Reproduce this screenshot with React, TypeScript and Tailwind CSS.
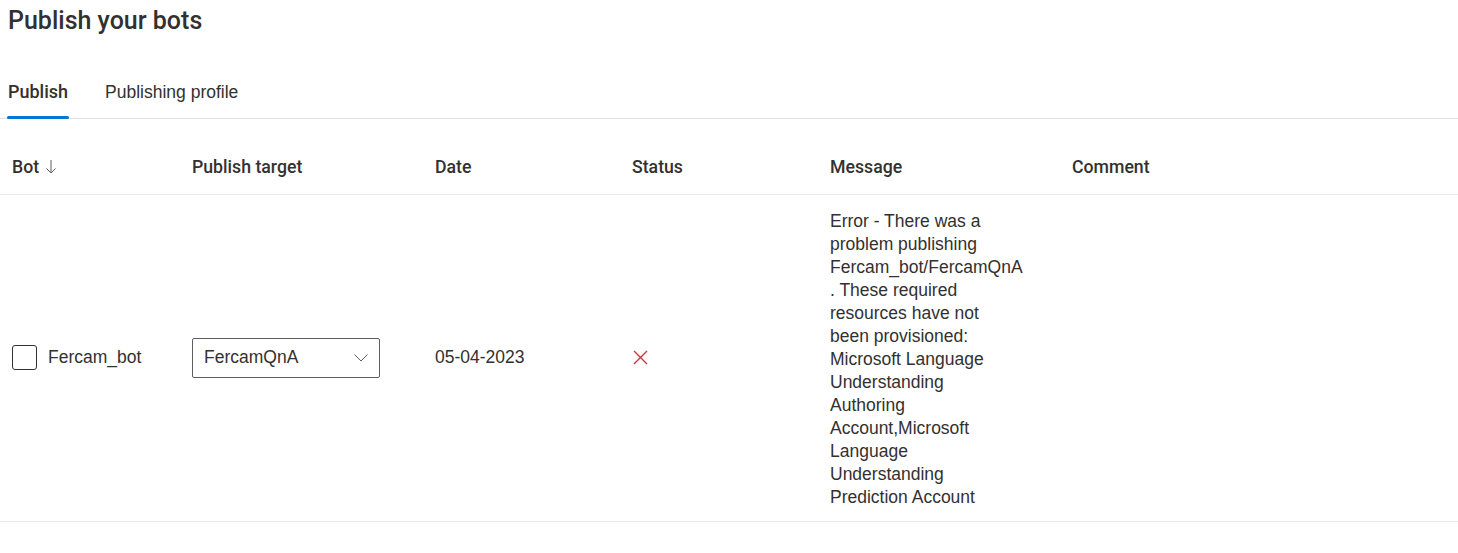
import React from 'react';

const messageLines = [
  'Error - There was a',
  'problem publishing',
  'Fercam_bot/FercamQnA',
  '. These required',
  'resources have not',
  'been provisioned:',
  'Microsoft Language',
  'Understanding',
  'Authoring',
  'Account,Microsoft',
  'Language',
  'Understanding',
  'Prediction Account',
];

const cols = 'grid grid-cols-[180px_243px_197px_198px_242px_1fr] pl-3';

const App: React.FC = () => {
  return (
    <div className="w-[1458px] h-[553px] bg-white text-[#323130] font-['Liberation_Sans',Arial,sans-serif] text-[17.5px]">
      <h1 className="pl-2 pt-[5px] text-[25px] leading-[32px] font-medium font-['Roboto',sans-serif]">
        Publish your bots
      </h1>

      <div className="mt-[43px] flex gap-[37px] pl-2 border-b border-[#e1dfdd]">
        <div className="relative pb-[14px] font-['Roboto',sans-serif] font-medium text-[18px] leading-6">
          Publish
          <span className="absolute left-[-1px] right-[-1px] bottom-[-1px] h-[3px] bg-[#0078d4] rounded-sm" />
        </div>
        <div className="pb-[14px] leading-6">Publishing profile</div>
      </div>

      <div className={`${cols} pt-[36px] pb-[15px] border-b border-[#edebe9] font-['Roboto',sans-serif] font-medium text-[17.7px] leading-6`}>
        <div className="flex items-center gap-[6px]">
          Bot
          <svg className="w-[12px] h-[16px] text-[#605e5c]" viewBox="0 0 12 16" fill="none" stroke="currentColor" strokeWidth="1">
            <path d="M6 1v13M1.5 9.5 6 14l4.5-4.5" />
          </svg>
        </div>
        <div>Publish target</div>
        <div>Date</div>
        <div>Status</div>
        <div>Message</div>
        <div>Comment</div>
      </div>

      <div className={`${cols} pt-[15px] pb-[12px] border-b border-[#edebe9] items-center leading-[23px]`}>
        <div className="flex items-center gap-[11px] pb-[4px]">
          <span className="w-[25px] h-[25px] border-[1.5px] border-[#323130] rounded-[3px]" />
          <span>Fercam_bot</span>
        </div>
        <div className="pb-[4px]">
          <div className="w-[188px] h-[40px] border border-[#605e5c] rounded-[2px] flex items-center justify-between pl-[11px] pr-[11px]">
            <span>FercamQnA</span>
            <svg className="w-[14px] h-[8px] text-[#605e5c]" viewBox="0 0 14 8" fill="none" stroke="currentColor" strokeWidth="1">
              <path d="M0.5 0.5 7 7l6.5-6.5" />
            </svg>
          </div>
        </div>
        <div className="pb-[4px]">05-04-2023</div>
        <div className="pl-[1px] pb-[4px] flex">
          <svg className="w-[15px] h-[15px] text-[#d13438]" viewBox="0 0 15 15" fill="none" stroke="currentColor" strokeWidth="1.4">
            <path d="M1 1l13 13M14 1 1 14" />
          </svg>
        </div>
        <div>
          {messageLines.map((line, i) => (
            <div key={i}>{line}</div>
          ))}
        </div>
        <div />
      </div>
    </div>
  );
};

export default App;
